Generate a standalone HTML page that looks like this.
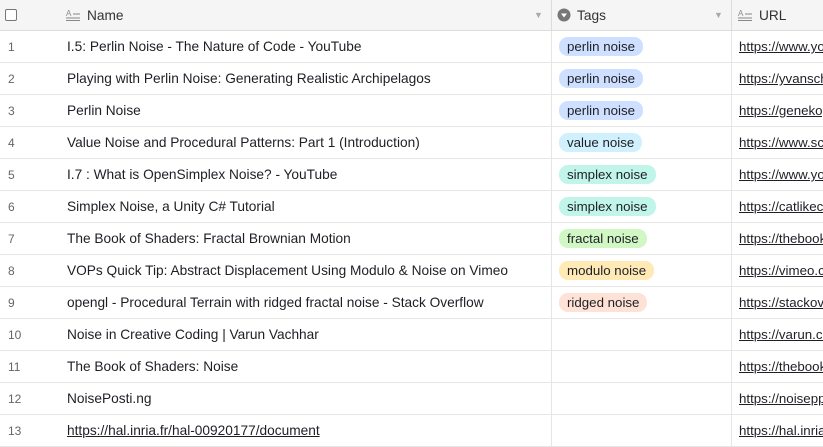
<!DOCTYPE html>
<html><head><style>
body{margin:0;width:823px;height:445px;overflow:hidden;background:#fff;font-family:"Liberation Sans",sans-serif;font-size:13.7px;color:#1d1f25}
.hdr{position:absolute;top:0;left:0;width:823px;height:30px;background:#f5f5f5;border-bottom:1px solid #dcdcdc}
.row{position:absolute;left:0;width:823px;height:31px;border-bottom:1px solid #e6e6e6}
.c{position:absolute;top:0;height:100%;display:flex;align-items:center;white-space:nowrap;overflow:hidden}
.n{left:8px;width:40px;color:#666;font-size:12px}
.nm{left:67px;width:480px}
.tg{left:551px;width:180px;border-left:1px solid #e6e6e6;padding-left:7px;box-sizing:border-box}
.ur{left:731px;width:92px;border-left:1px solid #e6e6e6;padding-left:7px;box-sizing:border-box;font-size:13.3px}
.ur span{text-decoration:underline}
.pill{border-radius:9px;padding:2px 8px;font-size:13.3px}
.hc{position:absolute;top:0;height:30px;display:flex;align-items:center;color:#333}
</style></head><body>
<div class="hdr">
<div class="hc" style="left:5px"><div style="width:10px;height:10px;border:1px solid #777;border-radius:2px;background:#fff"></div></div>
<div class="hc" style="left:66px"><svg width="16" height="12" style="margin-right:5px"><text x="0" y="7" font-size="8" fill="#888" font-family="Liberation Sans">A</text><line x1="7" y1="5" x2="14" y2="5" stroke="#888"/><line x1="0" y1="9" x2="14" y2="9" stroke="#888"/><line x1="0" y1="11.5" x2="14" y2="11.5" stroke="#888"/></svg>Name</div>
<div class="hc" style="left:534px;color:#aaa;font-size:9px">▼</div>
<div style="position:absolute;left:551px;top:0;height:30px;border-left:1px solid #dcdcdc"></div>
<div class="hc" style="left:557px"><svg width="14" height="14" style="margin-right:6px"><circle cx="7" cy="7" r="6.5" fill="#777"/><path d="M4 5.5h6l-3 4z" fill="#fff"/></svg>Tags</div>
<div class="hc" style="left:714px;color:#aaa;font-size:9px">▼</div>
<div style="position:absolute;left:731px;top:0;height:30px;border-left:1px solid #dcdcdc"></div>
<div class="hc" style="left:738px"><svg width="16" height="12" style="margin-right:5px"><text x="0" y="7" font-size="8" fill="#888" font-family="Liberation Sans">A</text><line x1="7" y1="5" x2="14" y2="5" stroke="#888"/><line x1="0" y1="9" x2="14" y2="9" stroke="#888"/><line x1="0" y1="11.5" x2="14" y2="11.5" stroke="#888"/></svg>URL</div>
</div>

<div class="row" style="top:31px"><div class="c n">1</div><div class="c nm">I.5: Perlin Noise - The Nature of Code - YouTube</div><div class="c tg"><span class="pill" style="background:#cfdfff">perlin noise</span></div><div class="c ur"><span>https://www.youtube.com</span></div></div>
<div class="row" style="top:63px"><div class="c n">2</div><div class="c nm">Playing with Perlin Noise: Generating Realistic Archipelagos</div><div class="c tg"><span class="pill" style="background:#cfdfff">perlin noise</span></div><div class="c ur"><span>https://yvanscher.com</span></div></div>
<div class="row" style="top:95px"><div class="c n">3</div><div class="c nm">Perlin Noise</div><div class="c tg"><span class="pill" style="background:#cfdfff">perlin noise</span></div><div class="c ur"><span>https://genekogan.com</span></div></div>
<div class="row" style="top:127px"><div class="c n">4</div><div class="c nm">Value Noise and Procedural Patterns: Part 1 (Introduction)</div><div class="c tg"><span class="pill" style="background:#d0f0fd">value noise</span></div><div class="c ur"><span>https://www.scratch</span></div></div>
<div class="row" style="top:159px"><div class="c n">5</div><div class="c nm">I.7 : What is OpenSimplex Noise? - YouTube</div><div class="c tg"><span class="pill" style="background:#c2f5e9">simplex noise</span></div><div class="c ur"><span>https://www.youtube.com</span></div></div>
<div class="row" style="top:191px"><div class="c n">6</div><div class="c nm">Simplex Noise, a Unity C# Tutorial</div><div class="c tg"><span class="pill" style="background:#c2f5e9">simplex noise</span></div><div class="c ur"><span>https://catlikecoding</span></div></div>
<div class="row" style="top:223px"><div class="c n">7</div><div class="c nm">The Book of Shaders: Fractal Brownian Motion</div><div class="c tg"><span class="pill" style="background:#d1f7c4">fractal noise</span></div><div class="c ur"><span>https://thebookofshaders</span></div></div>
<div class="row" style="top:255px"><div class="c n">8</div><div class="c nm">VOPs Quick Tip: Abstract Displacement Using Modulo &amp; Noise on Vimeo</div><div class="c tg"><span class="pill" style="background:#ffeab6">modulo noise</span></div><div class="c ur"><span>https://vimeo.com</span></div></div>
<div class="row" style="top:287px"><div class="c n">9</div><div class="c nm">opengl - Procedural Terrain with ridged fractal noise - Stack Overflow</div><div class="c tg"><span class="pill" style="background:#fee2d5">ridged noise</span></div><div class="c ur"><span>https://stackoverflow</span></div></div>
<div class="row" style="top:319px"><div class="c n">10</div><div class="c nm">Noise in Creative Coding | Varun Vachhar</div><div class="c tg"></div><div class="c ur"><span>https://varun.ca</span></div></div>
<div class="row" style="top:351px"><div class="c n">11</div><div class="c nm">The Book of Shaders: Noise</div><div class="c tg"></div><div class="c ur"><span>https://thebookofshaders</span></div></div>
<div class="row" style="top:383px"><div class="c n">12</div><div class="c nm">NoisePosti.ng</div><div class="c tg"></div><div class="c ur"><span>https://noisepposti.ng</span></div></div>
<div class="row" style="top:415px"><div class="c n">13</div><div class="c nm"><span style="text-decoration:underline">https://hal.inria.fr/hal-00920177/document</span></div><div class="c tg"></div><div class="c ur"><span>https://hal.inria.fr</span></div></div>
</body></html>
